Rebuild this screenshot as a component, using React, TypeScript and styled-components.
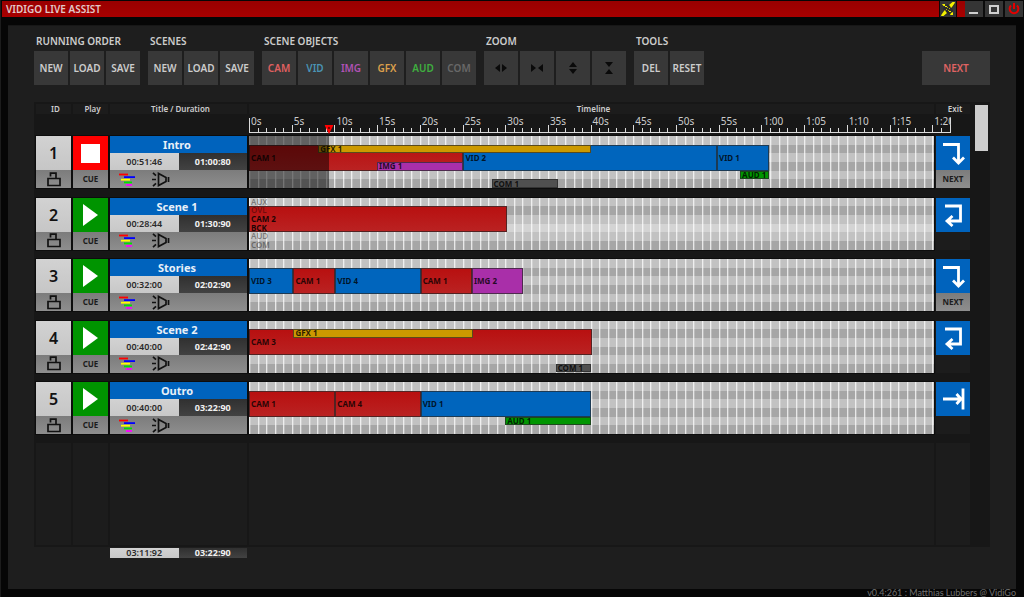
import React from "react";
import styled, { createGlobalStyle, css } from "styled-components";

const GlobalStyle = createGlobalStyle`
  * { box-sizing: border-box; }
  body {
    margin: 0;
    background: #060606;
    font-family: "Noto Sans", "Open Sans", sans-serif;
    color: #cccccc;
  }
  button {
    margin: 0;
    padding: 0;
    border: 0;
    font: inherit;
    color: inherit;
    cursor: pointer;
  }
`;

const TRACK_SECONDS = 80.2;
const RULER_SECONDS = 82.2;
const PLAYHEAD = 9.35;

/* ---------- window frame ---------- */

const Window = styled.div`
  display: flex;
  flex-direction: column;
  min-height: 100vh;
  padding: 1px 1px 0;
  border-left: 1px solid #1c1c1c;
  background: #060606;
`;

const TitleBar = styled.header`
  display: flex;
  height: 16px;
  gap: 2px;
  background: linear-gradient(#990000, #a80000);
`;

const AppName = styled.h1`
  flex: 1;
  margin: 0;
  padding-left: 4px;
  font-size: 10px;
  line-height: 16px;
  font-weight: 600;
  color: #e2c8c8;
`;

const WindowButtons = styled.div`
  display: flex;
  gap: 2px;
  background: #0c0c0c;
`;

const WindowButton = styled.button`
  display: grid;
  place-items: center;
  width: 18px;
  height: 16px;
  background: #353535;
`;

const StatusButton = styled(WindowButton)`
  margin-right: 6px;
  border: solid #100606;
  border-width: 0 1px;
`;

const Panel = styled.main`
  flex: 1;
  display: flex;
  flex-direction: column;
  margin: 8px 7px 0 6px;
  padding: 8px 26px 31px;
  background: #1e1e1e;
  border-top: 1px solid #171717;
`;

const Version = styled.footer`
  padding-right: 7px;
  font-family: Lato, "Noto Sans", sans-serif;
  font-size: 9px;
  line-height: 8px;
  text-align: right;
  color: #727272;
`;

/* ---------- toolbar ---------- */

const Toolbar = styled.div`
  display: flex;
  align-items: flex-end;
  gap: 8px;
  margin-bottom: 17px;
`;

const Group = styled.section`
  display: flex;
  flex-direction: column;
`;

const GroupTitle = styled.h2`
  margin: 0;
  padding: 0 0 2px 2px;
  font-size: 10px;
  line-height: 15px;
  height: 17px;
  font-weight: 600;
  white-space: nowrap;
`;

const ButtonRow = styled.div`
  display: flex;
  gap: 2px;
`;

const ToolButton = styled.button<{ $color?: string; $wide?: boolean }>`
  display: grid;
  place-items: center;
  width: ${(p) => (p.$wide ? 68 : 34)}px;
  height: 34px;
  background: #383838;
  font-size: 10px;
  font-weight: 600;
  color: ${(p) => p.$color ?? "#cccccc"};
`;

const Spacer = styled.div`
  flex: 1;
`;

/* ---------- running order ---------- */

const Board = styled.div`
  flex: 1;
  display: flex;
  gap: 5px;
  padding: 2px;
  background: #171717;
`;

const Table = styled.table`
  flex: 1;
  display: flex;
  flex-direction: column;
`;

const columns = css`
  display: grid;
  grid-template-columns: 35px 35px 137px minmax(0, 1fr) 34px;
  column-gap: 2px;
`;

const Head = styled.thead`
  display: block;
`;

const HeadRow = styled.tr`
  ${columns}
`;

const HeadCell = styled.th`
  padding: 0 0 0 4px;
  height: 10px;
  background: #1c1c1c;
  font-size: 8px;
  line-height: 10px;
  font-weight: 600;
`;

const RulerCell = styled.td`
  grid-column: 4 / 6;
  padding: 0 19px 2px 0;
`;

const Ruler = styled.div`
  position: relative;
  height: 20px;
  overflow: hidden;
`;

const RulerLines = styled.svg`
  display: block;
  width: 100%;
  height: 20px;
`;

const RulerLabel = styled.span`
  position: absolute;
  top: 0;
  margin-left: 2px;
  font-size: 10px;
  line-height: 14px;
  white-space: nowrap;
`;

const Playhead = styled.svg`
  position: absolute;
  bottom: 0;
  width: 9px;
  height: 9px;
  transform: translateX(-50%);
`;

const Body = styled.tbody`
  flex: 1;
  display: flex;
  flex-direction: column;
  justify-content: space-between;
`;

const Scenes = styled(Body)`
  flex: none;
  min-height: 298px;
`;

const Filler = styled(Body)`
  padding-top: 9px;
`;

const SceneRow = styled.tr`
  ${columns}
  height: 52px;
`;

const FillerRow = styled.tr`
  ${columns}
  flex: 1;
  min-height: 40px;
`;

const Cell = styled.td`
  display: flex;
  flex-direction: column;
  padding: 0;
  background: #1c1c1c;
`;

const FramedCell = styled(Cell)`
  box-shadow: 0 0 0 1px #0d0d0d;
`;

const SceneId = styled.div`
  height: 34px;
  background: linear-gradient(#d2d2d2, #c6c6c6);
  font-size: 16px;
  line-height: 35px;
  font-weight: 600;
  text-align: center;
  color: #111111;
`;

const FootButton = styled.button`
  display: grid;
  place-items: center;
  width: 100%;
  height: 18px;
  background: linear-gradient(#7c7c7c, #8e8e8e);
  font-size: 8px;
  line-height: 16px;
  font-weight: 700;
  color: #1c1c1c;
`;

const PlayButton = styled.button<{ $active?: boolean }>`
  display: grid;
  place-items: center;
  width: 100%;
  height: 34px;
  background: ${(p) => (p.$active ? "#ff0000" : "#009400")};
`;

const SceneTitle = styled.div`
  height: 17px;
  padding-right: 3px;
  background: #0063bd;
  font-size: 11px;
  line-height: 17px;
  font-weight: 700;
  text-align: center;
  color: #e8f0f8;
`;

const Times = styled.div<{ $slim?: boolean }>`
  display: grid;
  grid-template-columns: 1fr 1fr;
  height: ${(p) => (p.$slim ? 10 : 17)}px;
  font-size: 9px;
  line-height: ${(p) => (p.$slim ? 10 : 17)}px;
  text-align: center;
`;

const Duration = styled.span`
  background: linear-gradient(#d2d2d2, #c8c8c8);
  font-weight: 600;
  color: #2a2a2a;
`;

const EndTime = styled.span`
  background: linear-gradient(#303030, #424242);
  font-weight: 700;
  color: #f0f0f0;
`;

const SceneTools = styled.div`
  display: flex;
  align-items: center;
  gap: 16px;
  height: 18px;
  padding-left: 9px;
  background: linear-gradient(#7c7c7c, #8e8e8e);
`;

const IconButton = styled.button`
  display: grid;
  background: none;
`;

const ExitButton = styled.button`
  display: grid;
  place-items: center;
  width: 100%;
  height: 34px;
  background: #0063bd;
`;

const Track = styled.div`
  position: relative;
  height: 52px;
  overflow: hidden;
  background: #c2c2c2;
`;

const Lanes = styled.div`
  position: absolute;
  inset: 0;
  display: grid;
  grid-template-rows: repeat(6, 1fr);
`;

const Lane = styled.div<{ $tone: string }>`
  background: ${(p) => p.$tone};
`;

const SecondLines = styled.svg`
  position: absolute;
  inset: 0;
  width: 100%;
  height: 100%;
`;

type Kind = "CAM" | "VID" | "IMG" | "GFX" | "AUD" | "COM";

const clipFill: Record<Kind, string> = {
  CAM: "linear-gradient(#b81010, #ba2222)",
  VID: "#0065bd",
  IMG: "#a92fa9",
  GFX: "#cc9900",
  AUD: "#009500",
  COM: "#505050",
};

/* first lane and number of lanes that a clip covers */
const laneSpan = {
  main: [1, 3],
  upper: [1, 1],
  lower: [3, 1],
  audio: [4, 1],
  comment: [5, 1],
} as const;

const ClipBox = styled.div<{ $kind: Kind; $lane: keyof typeof laneSpan }>`
  position: absolute;
  top: calc(100% / 6 * ${(p) => laneSpan[p.$lane][0]});
  height: calc(100% / 6 * ${(p) => laneSpan[p.$lane][1]});
  display: flex;
  align-items: center;
  padding-left: 1px;
  border: 1px solid rgba(40, 40, 40, 0.7);
  background: ${(p) => clipFill[p.$kind]};
  font-size: 8px;
  line-height: 8px;
  font-weight: 700;
  white-space: nowrap;
  color: rgba(0, 0, 0, 0.8);
`;

const LaneNames = styled.div`
  position: absolute;
  inset: 0;
  display: grid;
  grid-template-rows: repeat(6, 1fr);
  align-items: center;
  padding-left: 2px;
  font-size: 8px;
  line-height: 8px;
`;

const LaneName = styled.span<{ $strong?: boolean }>`
  font-weight: ${(p) => (p.$strong ? 700 : 600)};
  color: ${(p) => (p.$strong ? "rgba(0,0,0,0.85)" : "rgba(0,0,0,0.4)")};
`;

const Played = styled.div`
  position: absolute;
  inset: 0 auto 0 0;
  background: rgba(0, 0, 0, 0.5);
`;

const ScrollTrack = styled.div`
  width: 13px;
  padding-top: 1px;
`;

const ScrollThumb = styled.div`
  height: 46px;
  background: #cccccc;
`;

const Totals = styled.div`
  width: 137px;
  margin: 1px 0 0 76px;
`;

/* ---------- icons ---------- */

const LinkIcon = () => (
  <svg width="16" height="16" viewBox="0 0 16 16">
    <path d="M4 6l3-3 2 1 4-3h2v2l-3 4 1 3-4 4-2-1-4 3H1v-2l3-4-1-3z" fill="#2a2a2a" />
    <path
      d="M15 1h-2.500L9 4l1 1 1 2 1-1 2.500-3.500zM1 15h2.500L7 12l-1-1-1-2-1 1-2.500 3.500zM2 3h3v2H3.500zM11 12l2-1v3h-3zM5 5h2v1H5zM9 10h2v1H9z"
      fill="#f4f000"
    />
    <path d="M7 6h1v1H7zM9 7h1v1H9zM6 8h1v1H6zM8 9h1v1H8z" fill="#b8b400" />
  </svg>
);

const PowerIcon = () => (
  <svg width="12" height="12" viewBox="0 0 12 12" fill="none" stroke="#e60000" strokeWidth="2">
    <path d="M3 2.6a4.4 4.4 0 1 0 6 0M6 0v6" />
  </svg>
);

const LockIcon = () => (
  <svg width="14" height="15" viewBox="0 0 14 15" fill="none" stroke="#111" strokeWidth="1.7">
    <path d="M1 6.5h12v7H1zM3.5 4.5V1.2h5.5v5" />
  </svg>
);

const BarsIcon = () => (
  <svg width="17" height="13" viewBox="0 0 17 13">
    <path d="M0 1.5h9" stroke="#ff0000" strokeWidth="1.8" />
    <path d="M5 4.1h11" stroke="#0000ff" strokeWidth="1.8" />
    <path d="M2 6.7h9" stroke="#ffff00" strokeWidth="1.8" />
    <path d="M5 9.4h8" stroke="#00e000" strokeWidth="1.8" />
    <path d="M7 12h6" stroke="#ff00ff" strokeWidth="1.8" />
  </svg>
);

const LampIcon = () => (
  <svg width="18" height="15" viewBox="0 0 18 15" fill="none" stroke="#111" strokeWidth="1.7">
    <path d="M6.5 1.5v12l7.5-4v-4zM1 .8l3 2.8M0 7.5h4M1 14.2l3-2.8M16.5 5v5" />
  </svg>
);

const PlayIcon = () => (
  <svg width="16" height="22" viewBox="0 0 16 22" fill="#fff">
    <path d="M0 0l15 11L0 22z" />
  </svg>
);

const StopIcon = () => (
  <svg width="19" height="19" viewBox="0 0 19 19">
    <path d="M0 0h19v19H0z" fill="#fff" />
  </svg>
);

const exitPaths = {
  next: "M2 3.5h15.5v18M12 16.5l5.5 5.5 5.5-5.5",
  loop: "M4 3h15.5v15H6.5M11.5 13l-5.500 5 5.500 5",
  end: "M2 12h18M22 1.5v21M15.5 7l4.500 5-4.500 5",
};

const ExitIcon = ({ kind }: { kind: keyof typeof exitPaths }) => (
  <svg width="24" height="24" viewBox="0 0 24 24" fill="none" stroke="#fff" strokeWidth="2.8">
    <path d={exitPaths[kind]} />
  </svg>
);

const zoomIcons = [
  { label: "Zoom in horizontally", d: "M6 3v8L1 7zM8 3v8l5-4z" },
  { label: "Zoom out horizontally", d: "M1 3v8l5-4zM13 3v8L8 7z" },
  { label: "Zoom in vertically", d: "M3 6h8L7 1zM3 8h8l-4 5z" },
  { label: "Zoom out vertically", d: "M3 1h8L7 6zM3 13h8L7 8z" },
];

/* ---------- data ---------- */

type Clip = {
  kind: Kind;
  name: string;
  lane: keyof typeof laneSpan;
  from: number;
  to: number;
};

type Scene = {
  title: string;
  duration: string;
  end: string;
  exit: keyof typeof exitPaths;
  playing?: boolean;
  showLanes?: boolean;
  clips: Clip[];
};

const clip = (name: string, lane: Clip["lane"], from: number, to: number): Clip => ({
  kind: name.slice(0, 3) as Kind,
  name,
  lane,
  from,
  to,
});

const scenes: Scene[] = [
  {
    title: "Intro",
    duration: "00:51:46",
    end: "01:00:80",
    exit: "next",
    playing: true,
    clips: [
      clip("CAM 1", "main", 0, 25.1),
      clip("VID 2", "main", 25.1, 54.8),
      clip("VID 1", "main", 54.8, 60.9),
      clip("GFX 1", "upper", 8.1, 40.1),
      clip("IMG 1", "lower", 15, 25.1),
      clip("AUD 1", "audio", 57.5, 60.9),
      clip("COM 1", "comment", 28.4, 36.2),
    ],
  },
  {
    title: "Scene 1",
    duration: "00:28:44",
    end: "01:30:90",
    exit: "loop",
    showLanes: true,
    clips: [clip("CAM 2", "main", 0, 30.2)],
  },
  {
    title: "Stories",
    duration: "00:32:00",
    end: "02:02:90",
    exit: "next",
    clips: [
      clip("VID 3", "main", 0, 5.2),
      clip("CAM 1", "main", 5.2, 10.1),
      clip("VID 4", "main", 10.1, 20.1),
      clip("CAM 1", "main", 20.1, 26.1),
      clip("IMG 2", "main", 26.1, 32.1),
    ],
  },
  {
    title: "Scene 2",
    duration: "00:40:00",
    end: "02:42:90",
    exit: "loop",
    clips: [
      clip("CAM 3", "main", 0, 40.1),
      clip("GFX 1", "upper", 5.2, 26.2),
      clip("COM 1", "comment", 35.9, 40.1),
    ],
  },
  {
    title: "Outro",
    duration: "00:40:00",
    end: "03:22:90",
    exit: "end",
    clips: [
      clip("CAM 1", "main", 0, 10.1),
      clip("CAM 4", "main", 10.1, 20.1),
      clip("VID 1", "main", 20.1, 40.1),
      clip("AUD 1", "audio", 30, 40.1),
    ],
  },
];

const sceneObjects = [
  ["CAM", "#e06060"],
  ["VID", "#4a94b4"],
  ["IMG", "#b052b4"],
  ["GFX", "#dca04c"],
  ["AUD", "#3fae3f"],
  ["COM", "#686868"],
];

const laneTones = ["#c2c2c2", "#a6a6a6", "#c2c2c2", "#a6a6a6", "#c2c2c2", "#a6a6a6"];
const openLaneTones = ["#c2c2c2", "#a6a6a6", "#c2c2c2", "#d4d4d4", "#c2c2c2", "#a6a6a6"];

const percent = (seconds: number, span: number) => `${(seconds / span) * 100}%`;

const rulerLabel = (s: number) =>
  s < 60 ? `${s}s` : `${Math.floor(s / 60)}:${String(s % 60).padStart(2, "0")}`;

/* ---------- parts ---------- */

function TimeRuler() {
  const ticks = Array.from({ length: 82 }, (_, s) => s);
  return (
    <Ruler>
      <RulerLines stroke="#dcdcdc" shapeRendering="crispEdges">
        {ticks.map((s) => (
          <line
            key={s}
            x1={percent(s + 0.06, RULER_SECONDS)}
            x2={percent(s + 0.06, RULER_SECONDS)}
            y1={s === 0 ? 4 : s % 5 === 0 ? 11 : 14}
            y2={19}
          />
        ))}
        <line x1="99.9%" x2="99.9%" y1={4} y2={19} />
        <line x1="0" x2="100%" y1={18.5} y2={18.5} />
      </RulerLines>
      {ticks
        .filter((s) => s % 5 === 0)
        .map((s) => (
          <RulerLabel key={s} style={{ left: percent(s, RULER_SECONDS) }}>
            {rulerLabel(s)}
          </RulerLabel>
        ))}
      <Playhead viewBox="0 0 9 9" style={{ left: percent(PLAYHEAD, RULER_SECONDS) }}>
        <path d="M0 0h9L4.5 9z" fill="#ff0000" />
        <circle cx="4.5" cy="3" r="1.2" fill="#700" />
      </Playhead>
    </Ruler>
  );
}

function SceneTrack({ scene }: { scene: Scene }) {
  const tones = scene.showLanes ? openLaneTones : laneTones;
  return (
    <Track>
      <Lanes>
        {tones.map((tone, i) => (
          <Lane key={i} $tone={tone} />
        ))}
      </Lanes>
      <SecondLines shapeRendering="crispEdges">
        {Array.from({ length: 81 }, (_, s) => (
          <g key={s} fill="#ffffff">
            <rect x={percent(s, TRACK_SECONDS)} y="0" width="2" height="100%" opacity="0.25" />
            <rect x={percent(s, TRACK_SECONDS)} y="0" width="1" height="100%" opacity="0.65" />
          </g>
        ))}
      </SecondLines>
      {scene.clips.map((c) => (
        <ClipBox
          key={`${c.name}-${c.from}`}
          $kind={c.kind}
          $lane={c.lane}
          style={{
            left: percent(c.from, TRACK_SECONDS),
            width: percent(c.to - c.from, TRACK_SECONDS),
          }}
        >
          {scene.showLanes ? null : c.name}
        </ClipBox>
      ))}
      {scene.showLanes && (
        <LaneNames>
          <LaneName>AUX</LaneName>
          <LaneName>OVL</LaneName>
          <LaneName $strong>{scene.clips[0].name}</LaneName>
          <LaneName $strong>BCK</LaneName>
          <LaneName>AUD</LaneName>
          <LaneName>COM</LaneName>
        </LaneNames>
      )}
      {scene.playing && <Played style={{ width: percent(PLAYHEAD, TRACK_SECONDS) }} />}
    </Track>
  );
}

function SceneLine({ scene, id }: { scene: Scene; id: number }) {
  return (
    <SceneRow>
      <FramedCell>
        <SceneId>{id}</SceneId>
        <FootButton aria-label="Lock scene">
          <LockIcon />
        </FootButton>
      </FramedCell>
      <FramedCell>
        <PlayButton $active={scene.playing} aria-label={scene.playing ? "Stop" : "Play"}>
          {scene.playing ? <StopIcon /> : <PlayIcon />}
        </PlayButton>
        <FootButton>CUE</FootButton>
      </FramedCell>
      <FramedCell>
        <SceneTitle>{scene.title}</SceneTitle>
        <Times>
          <Duration>{scene.duration}</Duration>
          <EndTime>{scene.end}</EndTime>
        </Times>
        <SceneTools>
          <IconButton aria-label="Layers">
            <BarsIcon />
          </IconButton>
          <IconButton aria-label="Lights">
            <LampIcon />
          </IconButton>
        </SceneTools>
      </FramedCell>
      <FramedCell>
        <SceneTrack scene={scene} />
      </FramedCell>
      <Cell>
        <ExitButton aria-label={`Exit: ${scene.exit}`}>
          <ExitIcon kind={scene.exit} />
        </ExitButton>
        {scene.exit === "next" && <FootButton>NEXT</FootButton>}
      </Cell>
    </SceneRow>
  );
}

function ToolGroup({ title, children }: { title: string; children: React.ReactNode }) {
  return (
    <Group>
      <GroupTitle>{title}</GroupTitle>
      <ButtonRow>{children}</ButtonRow>
    </Group>
  );
}

export default function App() {
  return (
    <Window>
      <GlobalStyle />
      <TitleBar>
        <AppName>VIDIGO LIVE ASSIST</AppName>
        <StatusButton aria-label="Connection">
          <LinkIcon />
        </StatusButton>
        <WindowButtons>
          <WindowButton aria-label="Minimize">
            <svg width="10" height="10" viewBox="0 0 10 10">
              <path d="M0 8h9v2H0z" fill="#d0d0d0" />
            </svg>
          </WindowButton>
          <WindowButton aria-label="Maximize">
            <svg width="10" height="10" viewBox="0 0 10 10">
              <path d="M1 2h8v7H1z" fill="none" stroke="#d0d0d0" strokeWidth="2" />
            </svg>
          </WindowButton>
          <WindowButton aria-label="Close">
            <PowerIcon />
          </WindowButton>
        </WindowButtons>
      </TitleBar>
      <Panel>
        <Toolbar>
          <ToolGroup title="RUNNING ORDER">
            <ToolButton>NEW</ToolButton>
            <ToolButton>LOAD</ToolButton>
            <ToolButton>SAVE</ToolButton>
          </ToolGroup>
          <ToolGroup title="SCENES">
            <ToolButton>NEW</ToolButton>
            <ToolButton>LOAD</ToolButton>
            <ToolButton>SAVE</ToolButton>
          </ToolGroup>
          <ToolGroup title="SCENE OBJECTS">
            {sceneObjects.map(([name, color]) => (
              <ToolButton key={name} $color={color}>
                {name}
              </ToolButton>
            ))}
          </ToolGroup>
          <ToolGroup title="ZOOM">
            {zoomIcons.map(({ label, d }) => (
              <ToolButton key={label} aria-label={label}>
                <svg width="14" height="14" viewBox="0 0 14 14">
                  <path d={d} fill="#0a0a0a" />
                </svg>
              </ToolButton>
            ))}
          </ToolGroup>
          <ToolGroup title="TOOLS">
            <ToolButton>DEL</ToolButton>
            <ToolButton>RESET</ToolButton>
          </ToolGroup>
          <Spacer />
          <ToolButton $wide $color="#e06464">
            NEXT
          </ToolButton>
        </Toolbar>
        <Board>
          <Table>
            <Head>
              <HeadRow>
                <HeadCell>ID</HeadCell>
                <HeadCell>Play</HeadCell>
                <HeadCell>Title / Duration</HeadCell>
                <HeadCell>Timeline</HeadCell>
                <HeadCell>Exit</HeadCell>
              </HeadRow>
              <HeadRow>
                <RulerCell>
                  <TimeRuler />
                </RulerCell>
              </HeadRow>
            </Head>
            <Scenes>
              {scenes.map((scene, i) => (
                <SceneLine key={scene.title} scene={scene} id={i + 1} />
              ))}
            </Scenes>
            <Filler>
              <FillerRow>
                <Cell />
                <Cell />
                <Cell />
                <Cell />
                <Cell />
              </FillerRow>
            </Filler>
          </Table>
          <ScrollTrack>
            <ScrollThumb />
          </ScrollTrack>
        </Board>
        <Totals>
          <Times $slim>
            <Duration>03:11:92</Duration>
            <EndTime>03:22:90</EndTime>
          </Times>
        </Totals>
      </Panel>
      <Version>v0.4:261 : Matthias Lubbers @ VidiGo</Version>
    </Window>
  );
}
